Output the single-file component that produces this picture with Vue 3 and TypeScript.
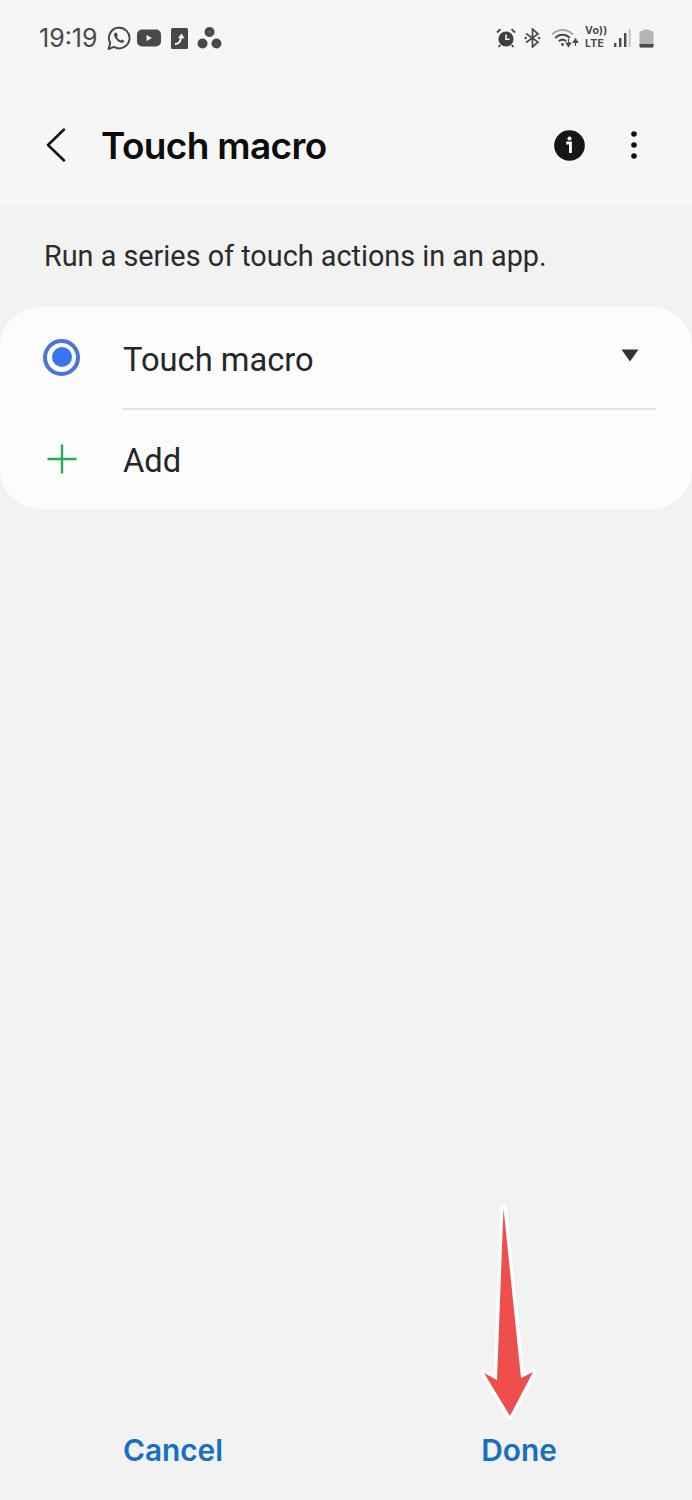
<script setup lang="ts">
const title: string = 'Touch macro'
</script>

<template>
  <div class="screen">
    <header class="top">
      <div class="status">
        <div class="status-left">
          <span class="time">19:19</span>
          <svg class="ic wa" width="24" height="24" viewBox="0 0 24 24">
            <path d="M1.6 23 L3.2 17 A10.3 10.3 0 1 1 7 20.9 Z" fill="none" stroke="#484848" stroke-width="2" stroke-linejoin="round"/>
            <path d="M8.3 6.6 C7 7.4 6.6 9 7.6 11 C8.8 13.6 11 15.7 13.6 16.6 C15.4 17.2 16.9 16.5 17.4 15 L14.9 13.4 L13.6 14.4 C12 13.8 10.6 12.4 9.9 10.8 L10.9 9.5 L9.6 6.7 Z" fill="#484848"/>
          </svg>
          <svg class="ic yt" width="24" height="18" viewBox="0 0 24 18">
            <rect x="0" y="0.5" width="24" height="17" rx="5" fill="#484848"/>
            <path d="M9.5 6 L15 9 L9.5 12 Z" fill="#f6f6f6"/>
          </svg>
          <svg class="ic doc" width="17" height="21" viewBox="0 0 17 21">
            <rect width="17" height="21" rx="1.5" fill="#484848"/>
            <path d="M4 16 C7.5 16 9.6 13.5 10 9.5" fill="none" stroke="#f6f6f6" stroke-width="2"/>
            <path d="M7 10 L10.6 5.5 L13.6 10.4 Z" fill="#f6f6f6"/>
          </svg>
          <svg class="ic dots" width="25" height="24" viewBox="0 0 25 24">
            <circle cx="12.5" cy="6" r="5" fill="#484848"/>
            <circle cx="12.5" cy="6" r="1.5" fill="#5c5c5c"/>
            <circle cx="5.5" cy="17.5" r="5" fill="#484848"/>
            <circle cx="19.5" cy="17.5" r="5" fill="#484848"/>
          </svg>
        </div>
        <div class="status-right">
          <svg class="s-alarm" width="20" height="20" viewBox="0 0 20 20">
            <circle cx="10" cy="11" r="7.6" fill="#3f3f3f"/>
            <path d="M10 6.5 V11.2 H13.6" fill="none" stroke="#f6f6f6" stroke-width="1.6"/>
            <path d="M1 4.5 L4.5 1.2 M19 4.5 L15.5 1.2 M4.3 17 L2.6 19 M15.7 17 L17.4 19" stroke="#3f3f3f" stroke-width="1.8"/>
          </svg>
          <svg class="s-bt" width="17" height="20" viewBox="0 0 17 20">
            <path d="M2 5.5 L14 14 L8.5 19 V1 L14 6 L2 14.5" fill="none" stroke="#4a4a4a" stroke-width="1.7"/>
            <circle cx="1.6" cy="10" r="1.2" fill="#4a4a4a"/>
            <circle cx="15.2" cy="10" r="1.2" fill="#4a4a4a"/>
          </svg>
          <svg class="s-wifi" width="28" height="20" viewBox="0 0 28 20">
            <path d="M1 6.5 C7 0.5 16 0.5 22 6.5" fill="none" stroke="#a8a8a8" stroke-width="2"/>
            <path d="M4.2 10 C8.5 5.8 14.5 5.8 18.8 10" fill="none" stroke="#4a4a4a" stroke-width="2"/>
            <path d="M7.8 13.2 C10 11.3 13 11.3 15.2 13.2" fill="none" stroke="#4a4a4a" stroke-width="2"/>
            <circle cx="11.5" cy="16.5" r="1.4" fill="#4a4a4a"/>
            <path d="M17.5 11 V17 M15.3 15 L17.5 18.5 L19.7 15 Z M24.5 18 V12.5 M22.3 14.5 L24.5 11 L26.7 14.5 Z" fill="#4a4a4a" stroke="#4a4a4a" stroke-width="1.2"/>
          </svg>
          <span class="volte"><span>Vo))</span><span>LTE</span></span>
          <svg class="s-sig" width="18" height="20" viewBox="0 0 18 20">
            <rect x="1" y="15" width="2.4" height="4" fill="#4a4a4a"/>
            <rect x="6" y="10" width="2.4" height="9" fill="#4a4a4a"/>
            <rect x="11" y="5" width="2.4" height="14" fill="#4a4a4a"/>
            <rect x="15.6" y="1" width="2.2" height="18" fill="#c9c9c9"/>
          </svg>
          <svg class="s-bat" width="15" height="20" viewBox="0 0 15 20">
            <path d="M4.5 1.5 H10.5 V3 H13 A1.5 1.5 0 0 1 14.5 4.5 V18 A1.5 1.5 0 0 1 13 19.5 H2 A1.5 1.5 0 0 1 0.5 18 V4.5 A1.5 1.5 0 0 1 2 3 H4.5 Z" fill="#b4b4b4"/>
            <path d="M0.5 16 H14.5 V18 A1.5 1.5 0 0 1 13 19.5 H2 A1.5 1.5 0 0 1 0.5 18 Z" fill="#4a4a4a"/>
          </svg>
        </div>
      </div>
      <div class="appbar">
        <svg class="back" width="20" height="34" viewBox="0 0 20 34">
          <path d="M18 1.5 L2 17 L18 32.5" fill="none" stroke="#111" stroke-width="2.5" stroke-linecap="round" stroke-linejoin="round"/>
        </svg>
        <h1 class="title">{{ title }}</h1>
        <svg class="info" width="31" height="31" viewBox="0 0 32 32">
          <circle cx="16" cy="16" r="15.8" fill="#161616"/>
          <circle cx="16" cy="8.8" r="2.1" fill="#f6f6f6"/>
          <path d="M12.6 13.4 H17 V23.8" fill="none" stroke="#f6f6f6" stroke-width="3"/>
        </svg>
        <svg class="more" width="8" height="30" viewBox="0 0 8 30">
          <circle cx="4" cy="4" r="2.8" fill="#111"/>
          <circle cx="4" cy="15" r="2.8" fill="#111"/>
          <circle cx="4" cy="26" r="2.8" fill="#111"/>
        </svg>
      </div>
    </header>

    <p class="desc">Run a series of touch actions in an app.</p>

    <section class="card">
      <div class="row row-first">
        <span class="radio"><span class="radio-dot"></span></span>
        <span class="label label-first">Touch macro</span>
        <svg class="caret" width="18" height="13" viewBox="0 0 18 13">
          <path d="M0.5 0.5 H17.5 L9 12.5 Z" fill="#333"/>
        </svg>
      </div>
      <div class="divider"></div>
      <div class="row row-second">
        <svg class="plus" width="30" height="30" viewBox="0 0 30 30">
          <path d="M0.5 15 H29.5 M15 0.5 V29.5" stroke="#2fa85a" stroke-width="2.4"/>
        </svg>
        <span class="label label-second">Add</span>
      </div>
    </section>

    <div class="spacer"></div>

    <footer class="actions">
      <span class="action">Cancel</span>
      <span class="action">Done</span>
    </footer>

    <svg class="arrow" width="60" height="218" viewBox="0 0 60 218">
      <path d="M24.5 5 L18 177 L5 170 L31 213 L54 169 L42 175 Z" fill="#ee4f4c" stroke="#fff" stroke-width="7" stroke-linejoin="round" paint-order="stroke"/>
    </svg>
  </div>
</template>

<style scoped>
.screen {
  position: relative;
  width: 692px;
  height: 1500px;
  background: #f2f2f2;
  display: flex;
  flex-direction: column;
  font-family: "Roboto", "Liberation Sans", sans-serif;
  overflow: hidden;
}
.top {
  background: #f6f6f6;
  height: 205px;
  flex: none;
  display: flex;
  flex-direction: column;
}
.status {
  display: flex;
  justify-content: space-between;
  align-items: center;
  height: 24px;
  margin-top: 26px;
  padding: 0 38px 0 39px;
}
.status-left {
  display: flex;
  align-items: center;
}
.time {
  font-family: "Inter", sans-serif;
  font-size: 25px;
  color: #4a4a4a;
}
.ic { display: block; }
.wa { margin-left: 9px; }
.yt { margin-left: 6px; }
.doc { margin-left: 10px; }
.dots { margin-left: 9px; }
.status-right {
  display: flex;
  align-items: center;
}
.s-bt { margin-left: 8px; }
.s-wifi { margin-left: 10px; }
.s-sig { margin-left: 8px; }
.s-bat { margin-left: 8px; }
.volte {
  margin-left: 6px;
  display: flex;
  flex-direction: column;
  font-family: "Inter", sans-serif;
  font-size: 10.5px;
  line-height: 12.8px;
  font-weight: 700;
  letter-spacing: 0.3px;
  color: #4a4a4a;
  width: 20px;
}
.appbar {
  display: flex;
  align-items: center;
  height: 40px;
  margin-top: 75px;
  padding: 0 54px 0 46px;
}
.back { flex: none; }
.title {
  flex: 1;
  margin: 0 0 0 35px;
  font-family: "Inter", sans-serif;
  font-size: 37px;
  font-weight: 600;
  letter-spacing: -0.65px;
  color: #0c0c0c;
}
.info { margin-right: 45px; }
.desc {
  margin: 34px 0 0;
  padding-left: 44px;
  height: 68px;
  font-size: 28.8px;
  line-height: 34px;
  color: #2b2b2b;
}
.card {
  background: #fcfcfc;
  border-radius: 40px;
  height: 202px;
  flex: none;
  display: flex;
  flex-direction: column;
}
.row {
  display: flex;
  align-items: center;
  padding: 0 53px 0 43px;
}
.row-first { height: 101px; }
.row-second { height: 100px; padding-left: 47px; }
.radio {
  width: 37px;
  height: 37px;
  box-sizing: border-box;
  border: 4px solid #4a76dc;
  border-radius: 50%;
  display: flex;
  align-items: center;
  justify-content: center;
  margin-right: 43px;
  flex: none;
}
.radio-dot {
  width: 20px;
  height: 20px;
  border-radius: 50%;
  background: #3a72f0;
}
.plus { margin-right: 46px; flex: none; }
.label {
  flex: 1;
  font-size: 32.7px;
  line-height: 38px;
  color: #262626;
}
.label-first { margin-top: 6px; }
.label-second { margin-top: 4px; }
.caret { flex: none; margin-bottom: 3px; }
.divider {
  height: 2px;
  margin: 0 36px 0 122px;
  background: #e2e2e2;
  flex: none;
}
.spacer { flex: 1; }
.actions {
  display: grid;
  grid-template-columns: 346px 346px;
  height: 100px;
  flex: none;
}
.action {
  text-align: center;
  font-family: "Inter", sans-serif;
  font-size: 29.8px;
  font-weight: 600;
  line-height: 100px;
  color: #1470c4;
}
.arrow {
  position: absolute;
  left: 479px;
  top: 1203px;
}
</style>

<style>
html, body { margin: 0; padding: 0; background: #f2f2f2; }
</style>
